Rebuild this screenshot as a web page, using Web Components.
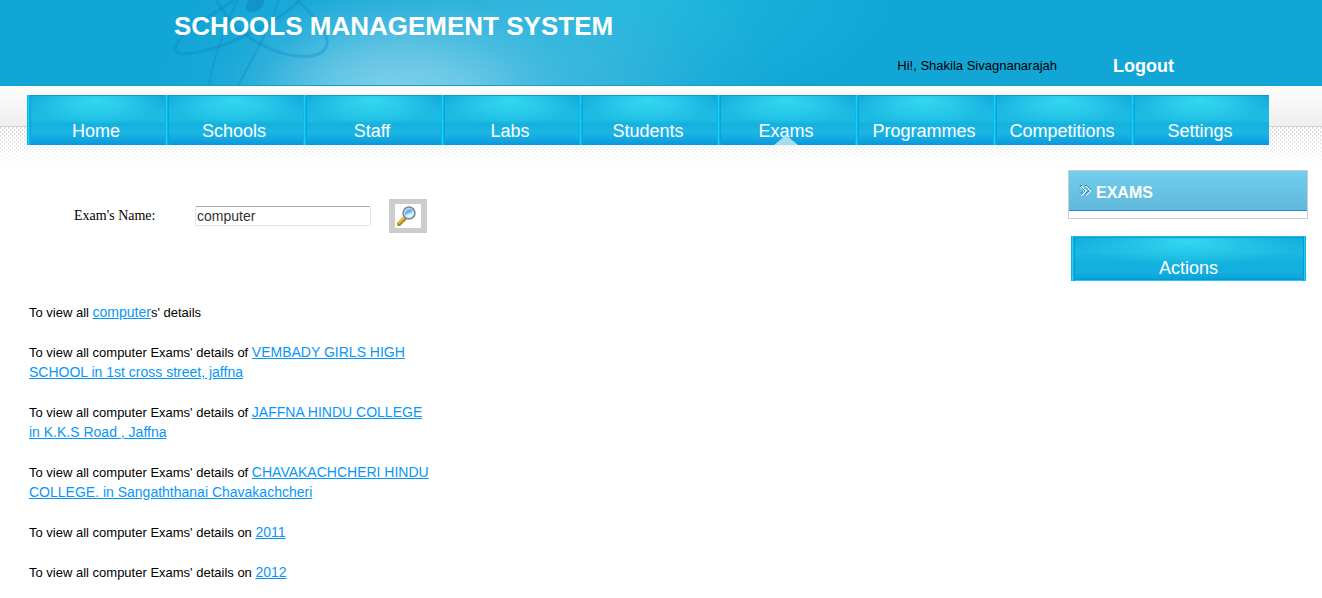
<!DOCTYPE html>
<html lang="en">
<head>
<meta charset="utf-8">
<title>Schools Management System</title>
<style>
  body {
    margin: 0;
    background: #fff;
    color: #000;
    font-family: "Liberation Sans", Arial, sans-serif;
    font-size: 13px;
  }
</style>
</head>
<body>
<sms-page>
  <sms-header slot="header" heading="SCHOOLS MANAGEMENT SYSTEM" user="Shakila Sivagnanarajah"></sms-header>

  <sms-nav slot="nav">
    <sms-nav-item>Home</sms-nav-item>
    <sms-nav-item>Schools</sms-nav-item>
    <sms-nav-item>Staff</sms-nav-item>
    <sms-nav-item>Labs</sms-nav-item>
    <sms-nav-item>Students</sms-nav-item>
    <sms-nav-item active>Exams</sms-nav-item>
    <sms-nav-item>Programmes</sms-nav-item>
    <sms-nav-item>Competitions</sms-nav-item>
    <sms-nav-item>Settings</sms-nav-item>
  </sms-nav>

  <exam-search value="computer"></exam-search>
  <exam-results></exam-results>

  <side-panel slot="side">EXAMS</side-panel>
  <action-button slot="side">Actions</action-button>
</sms-page>

<script>
/* Page frame */
class SmsPage extends HTMLElement {
  connectedCallback() {
    this.attachShadow({ mode: "open" });
    this.shadowRoot.innerHTML = `
    <style>
:host {
  display: block;
}

.top {
  display: grid;
}

/* grey band and the dotted fade under it */
.band, .bar {
  grid-area: 1 / 1;
}

.band {
  display: flex;
  flex-direction: column;
}

.band-grey {
  height: 40px;
  background: linear-gradient(#fdfdfd, #eeeeee);
  border-bottom: 1px solid #d2d2d2;
}

.band svg {
  display: block;
  width: 100%;
  height: 40px;
}

.bar {
  padding: 9px 53px 0 27px;
}

.columns {
  display: flex;
  justify-content: space-between;
  align-items: flex-start;
  padding: 0 14px 0 29px;
  margin-top: 3px;
}

main {
  flex: 1;
  padding-top: 29px;
}

aside {
  width: 240px;
  display: flex;
  flex-direction: column;
  gap: 17px;
}
    </style>
    <slot name="header"></slot>
    <div class="top">
      <div class="band">
        <div class="band-grey"></div>
        <svg aria-hidden="true">
          <defs>
            <pattern id="dots" width="4" height="4" patternUnits="userSpaceOnUse">
              <rect x="0" y="0" width="1" height="2" fill="#d4d4d4"/>
              <rect x="1" y="0" width="1" height="1" fill="#e8e8e8"/>
              <rect x="2" y="2" width="1" height="2" fill="#d4d4d4"/>
              <rect x="3" y="2" width="1" height="1" fill="#e8e8e8"/>
            </pattern>
            <linearGradient id="fade" x1="0" y1="0" x2="0" y2="1">
              <stop offset="0" stop-color="#fff" stop-opacity="0"/>
              <stop offset="1" stop-color="#fff"/>
            </linearGradient>
          </defs>
          <rect width="100%" height="40" fill="url(#dots)"/>
          <rect width="100%" height="40" fill="url(#fade)"/>
        </svg>
      </div>
      <div class="bar"><slot name="nav"></slot></div>
    </div>
    <div class="columns">
      <main><slot></slot></main>
      <aside><slot name="side"></slot></aside>
    </div>
`;
  }
}
customElements.define("sms-page", SmsPage);

/* Banner */
class SmsHeader extends HTMLElement {
  connectedCallback() {
    this.attachShadow({ mode: "open" });
    this.shadowRoot.innerHTML = `
    <style>
:host {
  display: block;
}

header {
  position: relative;
  display: flex;
  flex-direction: column;
  gap: 15px;
  padding: 11px 148px 9px 174px;
  border-bottom: 1px solid #12a0d0;
  background:
    radial-gradient(ellipse 180px 110px at 390px 100px, rgba(170, 224, 240, 0.65), rgba(170, 224, 240, 0.4) 40%, rgba(170, 224, 240, 0.1) 75%, rgba(170, 224, 240, 0)),
    radial-gradient(ellipse 310px 170px at 470px 90px, rgba(120, 204, 232, 0.55), rgba(120, 204, 232, 0.3) 45%, rgba(120, 204, 232, 0.08) 75%, rgba(120, 204, 232, 0)),
    radial-gradient(ellipse 240px 110px at 650px 0px, rgba(40, 195, 225, 0.6), rgba(40, 195, 225, 0.3) 45%, rgba(40, 195, 225, 0)),
    #12a6d6;
}

/* atom drawn behind the title */
.atom {
  position: absolute;
  left: 0;
  top: 0;
  width: 400px;
  height: 85px;
}

h1 {
  position: relative;
  margin: 0;
  color: #fff;
  font-size: 26px;
  line-height: 30px;
}

.user {
  display: flex;
  justify-content: flex-end;
  gap: 56px;
  line-height: 20px;
}

.user a {
  color: #fff;
  font-size: 18px;
  font-weight: bold;
  text-decoration: none;
}
    </style>
    <header>
      <svg class="atom" viewBox="0 0 400 85" fill="none" stroke="#0f86c4" stroke-opacity="0.35" aria-hidden="true">
        <ellipse cx="255" cy="4" rx="10" ry="7" transform="rotate(-35 255 4)" fill="#0f86c4" fill-opacity="0.6" stroke="none"/>
        <path stroke-width="3" d="M235 0C205 18 176 36 175 49C174 60 215 50 240 38C262 28 285 15 299 1"/>
        <path stroke-width="3" d="M216 -1C224 16 240 33 260 44C290 60 320 60 326 47C331 37 320 22 297 0"/>
        <path stroke-width="2" d="M209 86C212 60 224 30 238 -1"/>
        <path stroke-width="2" d="M238 86C255 52 270 30 279 -1"/>
      </svg>
      <h1>${this.getAttribute("heading")}</h1>
      <div class="user">
        <span>Hi!, ${this.getAttribute("user")}</span>
        <a href="#">Logout</a>
      </div>
    </header>
`;
  }
}
customElements.define("sms-header", SmsHeader);

/* Main navigation */
class SmsNav extends HTMLElement {
  connectedCallback() {
    this.attachShadow({ mode: "open" });
    this.shadowRoot.innerHTML = `
    <style>
:host {
  display: block;
}

nav {
  display: flex;
}
    </style>
    <nav><slot></slot></nav>
`;
  }
}
customElements.define("sms-nav", SmsNav);

class SmsNavItem extends HTMLElement {
  connectedCallback() {
    this.attachShadow({ mode: "open" });
    this.shadowRoot.innerHTML = `
    <style>
:host {
  display: block;
  flex: 1;
}

a {
  position: relative;
  display: block;
  padding: 26px 0 4px;
  color: #fff;
  font-size: 18px;
  line-height: 20px;
  text-align: center;
  text-decoration: none;
  background:
    linear-gradient(90deg, #10b4e4 1px, #0cd4fc 1px, #0cd4fc 2px, #10b4e4 2px, #10b4e4 3px, #10a0d2 3px, #10a0d2 4px, transparent 4px),
    linear-gradient(#0c9cc8 1px, transparent 1px),
    radial-gradient(ellipse 68px 24px at 50% 6px, rgba(54, 220, 242, 0.9), rgba(54, 220, 242, 0.5) 50%, rgba(54, 220, 242, 0)),
    linear-gradient(#12a8dc, #1cb8e2 30%, #1cbce2 50%, #14b0de 58%, #1cb6e2 74%, #12a8e0 88%, #0698de);
}

/* arrow for the current section */
:host([active]) a::after {
  content: "";
  position: absolute;
  left: calc(50% - 12px);
  bottom: 0;
  width: 24px;
  height: 10px;
  background: #a6dcf0;
  clip-path: polygon(50% 0, 100% 100%, 0 100%);
}
    </style>
    <a href="#"><slot></slot></a>
`;
  }
}
customElements.define("sms-nav-item", SmsNavItem);

/* Search form */
class ExamSearch extends HTMLElement {
  connectedCallback() {
    this.attachShadow({ mode: "open" });
    this.shadowRoot.innerHTML = `
    <style>
:host {
  display: block;
}

form {
  display: flex;
  align-items: center;
  padding-left: 45px;
}

label {
  width: 121px;
  font-family: "Liberation Serif", "Times New Roman", serif;
  font-size: 14px;
}

input {
  box-sizing: border-box;
  width: 176px;
  height: 20px;
  margin: 0 18px 0 0;
  padding: 0 1px 1px;
  border: 1px solid #dde2ec;
  border-top-color: #a8a9b2;
  border-radius: 2px;
  color: #333;
  font-family: inherit;
  font-size: 14px;
}

button {
  width: 38px;
  height: 34px;
  padding: 0;
  border: solid #ccc;
  border-width: 5px 6px;
  background: #fff;
}

svg {
  display: block;
}
    </style>
    <form>
      <label for="name">Exam's Name:</label>
      <input id="name" type="text" value="${this.getAttribute("value")}">
      <button type="button" aria-label="Search">
        <svg width="26" height="24" viewBox="0 0 26 24">
          <path d="M4 20L10 14" stroke="#a08020" stroke-width="4" stroke-linecap="round"/>
          <path d="M4 19L9 14" stroke="#e8c020" stroke-width="2" stroke-linecap="round"/>
          <circle cx="14" cy="9" r="6" fill="#b4dcf8" stroke="#80848c" stroke-width="1.5"/>
          <path d="M10 11C10 6 14 4 18 6C16 9 13 9 10 11Z" fill="#6eb2ea"/>
          <path d="M11 12C14 9 17 11 19 8C19 12 14 15 11 12Z" fill="#e4f4fe"/>
        </svg>
      </button>
    </form>
`;
  }
}
customElements.define("exam-search", ExamSearch);

/* Search results */
class ExamResults extends HTMLElement {
  connectedCallback() {
    this.attachShadow({ mode: "open" });
    this.shadowRoot.innerHTML = `
    <style>
:host {
  display: block;
  max-width: 400px;
  padding-top: 70px;
}

p {
  margin: 0 0 20px;
  line-height: 20px;
}

p:last-child {
  margin-bottom: 0;
}

/* shorter line box, so the larger text keeps the 20px rhythm */
a {
  color: #0896f8;
  font-size: 14px;
  line-height: 18px;
}
    </style>
    <p>To view all <a href="#">computer</a>s' details</p>
    <p>To view all computer Exams' details of <a href="#">VEMBADY GIRLS HIGH SCHOOL in 1st cross street, jaffna</a></p>
    <p>To view all computer Exams' details of <a href="#">JAFFNA HINDU COLLEGE in K.K.S Road , Jaffna</a></p>
    <p>To view all computer Exams' details of <a href="#">CHAVAKACHCHERI HINDU COLLEGE. in Sangaththanai Chavakachcheri</a></p>
    <p>To view all computer Exams' details on <a href="#">2011</a></p>
    <p>To view all computer Exams' details on <a href="#">2012</a></p>
`;
  }
}
customElements.define("exam-results", ExamResults);

/* Sidebar */
class SidePanel extends HTMLElement {
  connectedCallback() {
    this.attachShadow({ mode: "open" });
    this.shadowRoot.innerHTML = `
    <style>
:host {
  display: block;
  border: 1px solid #ccc;
  padding-bottom: 7px;
  background: #fff;
}

h2 {
  display: flex;
  align-items: center;
  gap: 4px;
  margin: 0;
  padding: 12px 10px 7px;
  border-bottom: 1px solid #1e94cc;
  background: linear-gradient(#72ceee, #60b8da);
  color: #fff;
  font-size: 16px;
  line-height: 20px;
}

svg {
  margin-bottom: 4px;
}
    </style>
    <h2>
      <svg width="13" height="12" viewBox="0 0 13 12" fill="none" aria-hidden="true">
        <path d="M1 0L6 5L1 10M6 0L11 5L6 10" stroke="#2890c8" stroke-width="2"/>
        <path d="M1 2L5 6L1 10M3 1L8 6L3 11M6 1L11 6L6 11" stroke="#fff" stroke-dasharray="1 1"/>
        <path d="M2 1L7 6L2 11M7 1L12 6L7 11" stroke="#fff"/>
      </svg>
      <slot></slot>
    </h2>
`;
  }
}
customElements.define("side-panel", SidePanel);

class ActionButton extends HTMLElement {
  connectedCallback() {
    this.attachShadow({ mode: "open" });
    this.shadowRoot.innerHTML = `
    <style>
:host {
  display: block;
  padding: 0 2px 0 3px;
}

button {
  display: block;
  width: 100%;
  padding: 22px 0 3px;
  border: 0;
  color: #fff;
  font-family: inherit;
  font-size: 18px;
  line-height: 20px;
  background:
    linear-gradient(90deg, #10b4e4 1px, #1cd4f6 1px, #1cd4f6 2px, #10b4e4 2px, #10b4e4 3px, #0c98cc 3px, #0c98cc 4px, transparent 4px),
    linear-gradient(270deg, #10b4e4 1px, #1cd4f6 1px, #1cd4f6 2px, #0c98cc 2px, #0c98cc 3px, transparent 3px),
    linear-gradient(#1cc0e8 1px, #0c9cd0 1px, #0c9cd0 2px, transparent 2px),
    linear-gradient(0deg, #20ccf0 1px, #0898d4 1px, #0898d4 2px, transparent 2px),
    radial-gradient(ellipse 110px 24px at 50% 6px, rgba(54, 220, 242, 0.9), rgba(54, 220, 242, 0.4) 50%, rgba(54, 220, 242, 0)),
    linear-gradient(#12acdc, #1cb8e2 35%, #12b0de 60%, #14b0e0 80%, #089cdc);
}
    </style>
    <button type="button"><slot></slot></button>
`;
  }
}
customElements.define("action-button", ActionButton);
</script>
</body>
</html>
